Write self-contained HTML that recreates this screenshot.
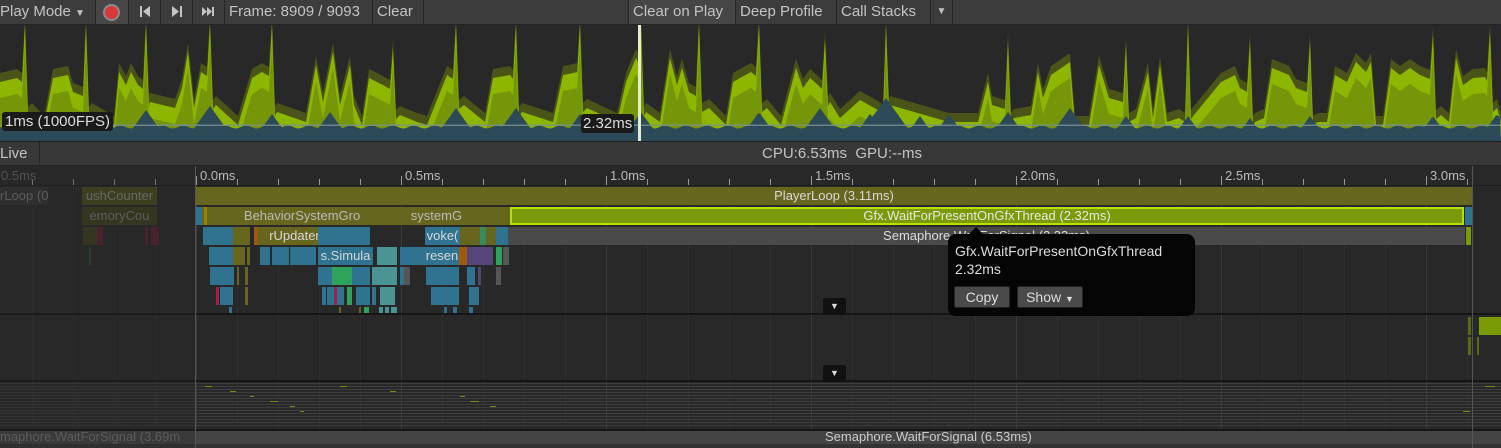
<!DOCTYPE html>
<html><head><meta charset="utf-8">
<style>
*{margin:0;padding:0;box-sizing:border-box}
body{width:1501px;height:448px;background:#282828;overflow:hidden;position:relative;font-family:"Liberation Sans",sans-serif;font-size:14px;color:#c4c4c4}
.a{position:absolute}
.tb{top:0;left:0;width:1501px;height:25px;background:#3c3c3c;border-bottom:1px solid #232323}
.bt{position:absolute;top:0;height:24px;line-height:24px;border-right:1px solid #262626;padding:0 4px;white-space:nowrap;font-size:15px}
.blk{position:absolute;overflow:hidden;white-space:nowrap;font-size:13px;line-height:18px;text-align:center;color:#d8d8d8}
</style></head><body>
<div class="a tb">
 <div class="bt" style="left:0;width:96px;padding-left:0">Play Mode <span style="font-size:10px">▼</span></div>
 <div class="bt" style="left:96px;width:33px;background:#474747"><span style="position:absolute;left:7px;top:4px;width:17px;height:17px;border-radius:50%;border:2px solid #8a8a8a;background:#d83a3a"></span></div>
 <div class="bt" style="left:129px;width:32px"><svg width="24" height="24"><rect x="7" y="6" width="2" height="11" fill="#c4c4c4"/><path d="M17 6V17L10 11.5Z" fill="#c4c4c4"/></svg></div>
 <div class="bt" style="left:161px;width:32px"><svg width="24" height="24"><path d="M7 6V17L14 11.5Z" fill="#c4c4c4"/><rect x="15" y="6" width="2" height="11" fill="#c4c4c4"/></svg></div>
 <div class="bt" style="left:193px;width:32px"><svg width="24" height="24"><path d="M5 7V16L10 11.5Z M10 7V16L15 11.5Z" fill="#c4c4c4"/><rect x="15" y="7" width="2" height="9" fill="#c4c4c4"/></svg></div>
 <div class="bt" style="left:225px;width:148px">Frame: 8909 / 9093</div>
 <div class="bt" style="left:373px;width:51px">Clear</div>
 <div class="bt" style="left:628px;width:108px;background:#464646;border-left:1px solid #262626">Clear on Play</div>
 <div class="bt" style="left:736px;width:101px">Deep Profile</div>
 <div class="bt" style="left:837px;width:94px">Call Stacks</div>
 <div class="bt" style="left:931px;width:22px;font-size:10px;text-align:center">▼</div>
</div>
<svg class="a" style="left:0;top:25px" width="1501" height="116" id="ch"></svg>
<div class="a" style="left:0;top:141px;width:1501px;height:1px;background:#1e1e1e"></div>
<div class="a" style="left:0;top:142px;width:1501px;height:24px;background:#383838;border-bottom:1px solid #232323"></div>
<div class="a" style="left:0;top:142px;width:40px;height:24px;line-height:24px;border-right:1px solid #262626;font-size:15px">Live</div>
<div class="a" style="left:762px;top:142px;line-height:24px;font-size:15px">CPU:6.53ms&nbsp;&nbsp;GPU:--ms</div>
<div class="a" style="left:2px;top:112px;background:#1a1a1a;border-radius:3px;padding:0 3px;line-height:19px;color:#ddd;font-size:15px">1ms (1000FPS)</div>
<div class="a" style="left:581px;top:114px;background:#1a1a1a;border-radius:3px;padding:0 2px;line-height:19px;color:#ddd;font-size:15px">2.32ms</div>
<div id="fl" class="a" style="left:0;top:166px;width:1501px;height:282px"></div>
<script>
(function(){
var P0=[[0,82],[17,78],[25,25],[32,112],[44,125],[53,78],[68,75],[73,92],[86,25],[92,112],[114,125],[119,72],[126,85],[131,72],[138,85],[146,25],[150,102],[175,108],[182,88],[188,52],[194,108],[201,72],[210,25],[216,105],[238,125],[252,78],[262,72],[272,25],[277,112],[306,122],[316,65],[323,102],[333,52],[340,105],[350,65],[354,105],[362,125],[369,78],[383,85],[393,48],[400,115],[417,122],[427,125],[447,75],[456,25],[464,105],[485,122],[493,78],[510,75],[516,25],[522,112],[553,122],[563,75],[578,72],[580,25],[587,108],[617,122],[626,82],[636,58],[641,25],[646,112],[660,122],[670,58],[677,85],[682,68],[689,92],[699,25],[709,108],[726,125],[733,82],
[740,78],[751,72],[759,25],[767,108],[781,125],[796,68],[803,88],[810,78],[818,85],[825,40],[830,102],[840,118],[860,100],[878,110],[886,25],[890,105],[949,122],[978,122],[988,82],[992,105],[1008,42],[1014,118],[1031,115],[1038,72],[1043,98],[1051,75],[1070,62],[1075,125],[1089,125],[1099,65],[1109,98],[1126,45],[1136,118],[1148,72],[1153,118],[1160,65],[1167,122],[1179,118],[1188,25],[1194,115],[1221,82],[1235,75],[1240,88],[1250,42],[1255,122],[1264,118],[1272,68],[1289,75],[1296,88],[1310,42],[1318,122],[1327,122],[1335,75],[1347,82],[1356,62],[1366,72],[1371,62],[1376,125],[1383,125],[1391,68],[1400,75],[1410,68],[1420,75],[1433,35],[1441,115],[1449,122],[1456,58],[1463,85],[1473,78],[1485,77],[1490,32],[1497,108],[1501,122]];
var P=[];
for(var i=0;i<P0.length;i++){var p=P0[i];if(p[1]<50&&i>0&&i<P0.length-1){var a=P0[i-1],b=P0[i+1];P.push([p[0]-3,Math.min(a[1]+4,125)]);P.push(p);P.push([p[0]+3,Math.min(b[1]+4,125)]);}else P.push(p);}
function path(off,cap){var s="M0 141";P.forEach(function(p){var y=Math.min(p[1]+off,cap);s+=" L"+p[0]+" "+y;});return s+" L1501 141Z";}
var bumps=[[25,112],[86,113],[146,110],[210,106],[272,114],[330,112],[456,108],[516,108],[580,114],[641,112],[759,112],[820,108],[886,98],[870,114],[920,116],[949,114],[1008,112],[1070,108],[1126,116],[1188,116],[1250,118],[1310,116],[1433,116],[1497,114]];
var bs="M0 141";for(var x=0;x<=1501;x+=2){var y=127+1.5*Math.sin(x*0.3);bumps.forEach(function(b){var v=b[1]+Math.abs(x-b[0])*1.4;if(v<y)y=v;});bs+=" L"+x+" "+y.toFixed(1);}bs+=" L1501 141Z";
document.getElementById('ch').innerHTML='<g transform="translate(0,-25)"><rect y="25" width="1501" height="116" fill="#282828"/><path d="'+path(-9,116)+'" fill="#4a5418"/><path d="'+path(0,200)+'" fill="#8db600"/><path d="'+path(16,200)+'" fill="#76960a"/><path d="'+bs+'" fill="#2c4a58"/><rect x="0" y="124.5" width="1501" height="1.5" fill="#7d8e96" opacity="0.8"/><rect x="638" y="25" width="3" height="116" fill="#e6ecd0"/></g>';
})();
(function(){
var h='';
function R(x,y,w,hh,c,t,tc){h+='<div class="blk" style="left:'+x+'px;top:'+y+'px;width:'+w+'px;height:'+hh+'px;background:'+c+(tc?';color:'+tc:'')+'">'+(t||'')+'</div>';}
for(var i=-4;i<32;i++){var x=196+i*41;if(x>0&&x<1501)h+='<div class="a" style="left:'+x+'px;top:20px;width:1px;height:262px;background:'+(i%5==0?'#3a3a3a':'#2f2f2f')+'"></div>';}
h+='<div class="a" style="left:0;top:0;width:1501px;height:20px;background:#282828;border-bottom:1px solid #1c1c1c"></div>';
for(var i=-4;i<32;i++){var x=196+i*41;if(x>0&&x<1501)h+='<div class="a" style="left:'+x+'px;top:'+(i%5==0?10:13)+'px;width:1px;height:'+(i%5==0?9:6)+'px;background:#999"></div>';}
var lab=[["0.0ms",196],["0.5ms",401],["1.0ms",606],["1.5ms",811],["2.0ms",1016],["2.5ms",1221],["3.0ms",1426]];
lab.forEach(function(l){h+='<div class="a" style="left:'+(l[1]+4)+'px;top:2px;font-size:13px;color:#bbb">'+l[0]+'</div>';});
h+='<div class="a" style="left:1px;top:2px;font-size:13px;color:#666">0.5ms</div>';
var O='#66661f',B='#2f7390',T='#4a9496',G='#2ea35e';
R(196,21,1276,18,O,'PlayerLoop (3.11ms)');
R(0,21,48,18,'#333','rLoop (0.1','#777');R(82,21,75,18,'#4a4a1e','ushCounter','#888');
R(82,41,75,18,'#3e3e1c','emoryCou','#777');R(83,61,15,18,'#3e3e1c');R(97,61,6,18,'#5a2030');R(145,61,3,18,'#5a2030');R(151,61,8,18,'#5a2030');R(89,81,2,18,'#2f4a30');
R(196,41,314,18,O,'BehaviorSystemGro&nbsp;&nbsp;&nbsp;&nbsp;&nbsp;&nbsp;&nbsp;&nbsp;&nbsp;&nbsp;&nbsp;&nbsp;&nbsp;&nbsp;systemG','#bbb');
R(196,41,6,18,B);R(204,41,3,18,'#a08000');
R(510,41,954,18,'#7a9a06','Gfx.WaitForPresentOnGfxThread (2.32ms)','#e8e8e8');
h+='<div class="a" style="left:510px;top:41px;width:954px;height:18px;border:2px solid #b8e000"></div>';
R(1465,41,7,18,B);
R(203,61,30,18,B);R(233,61,17,18,O);R(254,61,4,18,'#a05a10');R(258,61,112,18,O,'rUpdatenvoke()');R(318,61,52,18,B);R(425,61,35,18,B,'voke(');R(460,61,20,18,O);R(480,61,6,18,'#3a8a5a');R(486,61,10,18,O);R(496,61,12,18,B);
R(508,61,957,18,'#4a4a4a','Semaphore.WaitForSignal (2.32ms)','#ddd');R(1466,61,5,18,'#7a9a06');
R(209,81,24,18,B);R(233,81,12,18,O);R(247,81,3,18,O);R(260,81,10,18,B);R(272,81,17,18,B);R(290,81,26,18,B);R(318,81,55,18,B,'s.Simula');R(377,81,20,18,T);R(400,81,25,18,B);R(425,81,34,18,B,'resen');R(459,81,8,18,'#a05a10');R(467,81,26,18,'#564578');R(496,81,6,18,G);R(503,81,6,18,'#555');
R(210,101,24,18,B);R(237,101,2,18,O);R(245,101,3,18,O);R(318,101,52,18,B);R(332,101,20,18,G);R(372,101,25,18,T);R(400,101,4,18,B);R(404,101,6,18,'#555');R(426,101,33,18,B);R(467,101,8,18,B);R(478,101,3,18,'#564578');R(496,101,5,18,'#555');
R(216,121,3,18,'#a0204a');R(220,121,13,18,B);R(245,121,3,18,O);R(322,121,4,18,B);R(327,121,7,18,B);R(334,121,3,18,'#a0204a');R(337,121,7,18,B);R(347,121,5,18,G);R(356,121,14,18,B);R(372,121,4,18,B);R(380,121,15,18,T);R(431,121,28,18,B);R(469,121,10,18,B);
R(229,141,3,6,B);R(339,141,2,6,O);R(359,141,2,6,O);R(364,141,5,6,G);R(379,141,4,6,T);R(385,141,4,6,T);R(391,141,6,6,T);R(444,141,3,6,B);R(453,141,4,6,B);R(469,141,4,6,B);
h+='<div class="a" style="left:0;top:147px;width:1501px;height:2px;background:#161616"></div>';
h+='<div class="a" style="left:0;top:214px;width:1501px;height:2px;background:#161616"></div>';
R(1468,151,3,18,'#5a6a10');R(1479,151,22,18,'#7a9a06');R(1468,171,3,18,'#5a6a10');R(1477,171,2,18,'#5a6a10');
h+='<div class="a" style="left:823px;top:132px;width:23px;height:17px;background:#111;border-radius:2px;color:#ddd;font-size:9px;text-align:center;line-height:17px">▼</div>';
h+='<div class="a" style="left:823px;top:199px;width:23px;height:17px;background:#111;border-radius:2px;color:#ddd;font-size:9px;text-align:center;line-height:17px">▼</div>';
for(var y=217;y<262;y+=3){h+='<div class="a" style="left:0;top:'+y+'px;width:1501px;height:1px;background:#3d3d3d"></div>';}
var dots=[[205,7],[230,6],[250,4],[270,8],[290,5],[300,4],[340,7],[390,6],[460,5],[470,9],[490,6],[1463,7],[1485,10]];
dots.forEach(function(d,i){h+='<div class="a" style="left:'+d[0]+'px;top:'+(220+(i*5)%30)+'px;width:'+d[1]+'px;height:1px;background:#7a8a10"></div>';});
h+='<div class="a" style="left:0;top:263px;width:1501px;height:2px;background:#161616"></div>';
R(0,265,1501,13,'#444','<span style="position:absolute;left:0;top:-3px;color:#777">maphore.WaitForSignal (3.69m</span><span style="position:absolute;left:825px;top:-3px;color:#ccc">Semaphore.WaitForSignal (6.53ms)</span>');
h+='<div class="a" style="left:0;top:278px;width:1501px;height:4px;background:#333"></div>';
h+='<div class="a" style="left:0;top:0;width:195px;height:282px;background:rgba(40,40,40,0.35)"></div>';
h+='<div class="a" style="left:195px;top:0;width:1px;height:282px;background:#555"></div>';
h+='<div class="a" style="left:1472px;top:0;width:1px;height:282px;background:#555"></div>';
h+='<div class="a" style="left:968px;top:61px;width:0;height:0;border-left:8px solid transparent;border-right:8px solid transparent;border-bottom:8px solid #050505"></div>';
h+='<div class="a" style="left:948px;top:68px;width:247px;height:82px;background:#050505;border-radius:8px;color:#ddd;font-size:14px;padding:8px 0 0 7px;line-height:18px">Gfx.WaitForPresentOnGfxThread<br>2.32ms'+
'<div class="a" style="left:6px;top:52px;width:56px;height:22px;background:#4a4a4a;border:1px solid #222;border-radius:2px;text-align:center;line-height:20px">Copy</div>'+
'<div class="a" style="left:69px;top:52px;width:66px;height:22px;background:#4a4a4a;border:1px solid #222;border-radius:2px;text-align:center;line-height:20px">Show <span style="font-size:9px">▼</span></div></div>';
document.getElementById('fl').innerHTML=h;
})();
</script>
</body></html>
